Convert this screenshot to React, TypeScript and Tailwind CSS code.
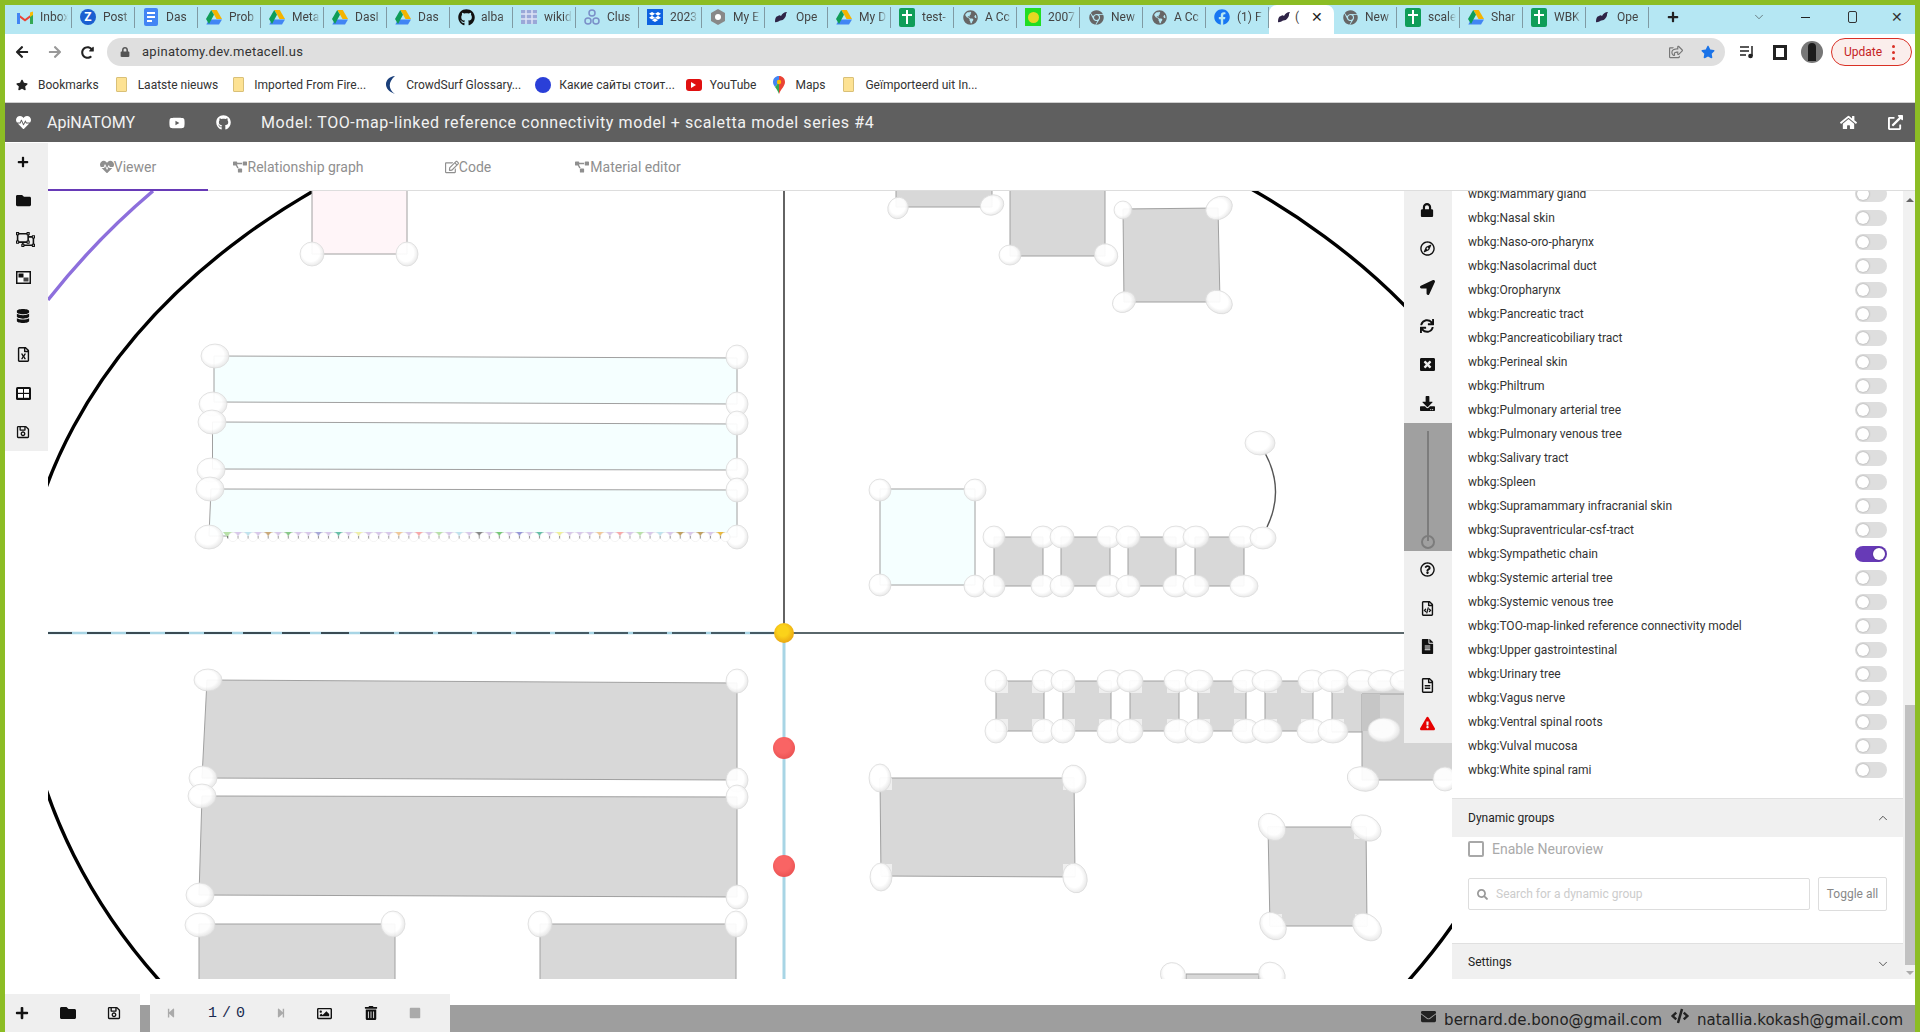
import React from "react";
import {
  FaPlus, FaFolder, FaRegObjectUngroup, FaDatabase, FaRegFileExcel, FaRegSave, FaLock, FaRegCompass,
  FaLocationArrow, FaSync, FaWindowClose, FaDownload, FaRegQuestionCircle, FaRegFileCode, FaFileAlt,
  FaRegFileAlt, FaExclamationTriangle, FaStepBackward, FaStepForward, FaRegImage, FaTrashAlt, FaStop,
  FaHome, FaExternalLinkAlt, FaHeartbeat, FaYoutube, FaGithub, FaEnvelope, FaCode, FaProjectDiagram,
  FaRegEdit, FaGlobeAmericas, FaChrome, FaFacebook, FaDropbox, FaStar, FaArrowLeft, FaArrowRight, FaRedoAlt,
  FaRegShareSquare, FaSearch,
} from "react-icons/fa";
import { ChevronUp, ChevronDown } from "lucide-react";

function Drive() {
  return (
    <svg width="16" height="15" viewBox="0 0 16 15">
      <polygon points="5.4,0 10.8,0 16,9 10.5,9" fill="#f4b400" />
      <polygon points="3,9.5 16,9.5 13,14.5 0.3,14.5" fill="#4285f4" />
      <polygon points="5.2,0 8,4.8 3,14 0,9" fill="#0f9d58" />
    </svg>
  );
}
function Gmail() {
  return (
    <svg width="16" height="13" viewBox="0 0 16 13">
      <path d="M0 2 L8 8 L16 2 L16 4.5 L8 10.5 L0 4.5Z" fill="#ea4335" />
      <rect x="0" y="2" width="3" height="11" fill="#4285f4" />
      <rect x="13" y="2" width="3" height="11" fill="#34a853" />
      <path d="M13 1.5 L16 0.5 L16 4 L13 6Z" fill="#fbbc04" />
    </svg>
  );
}
function Bird() {
  return (
    <svg width="14" height="12" viewBox="0 0 14 12">
      <path d="M1 11 C1 7 2 5.5 4 5 C5 4 6 4 7 5 C8 3 10 1 13 1 L12 3 C12.5 6 9 10 6 9.5 C4 11 2 11.5 1 11 Z" fill="#2f2447" />
    </svg>
  );
}
function Sheet() {
  return (
    <div className="w-[16px] h-[19px] bg-[#0f9d58] rounded-[2px] flex items-center justify-center shrink-0">
      <svg width="10" height="14" viewBox="0 0 10 14"><path d="M4 0h2v4h4v2H6v8H4V6H0V4h4z" fill="#fff" /></svg>
    </div>
  );
}
function TabIcon({ k }: { k: string }) {
  if (k === "gmail") return <Gmail />;
  if (k === "z")
    return <div className="w-[16px] h-[16px] rounded-full bg-[#1a5fd0] text-white text-[12px] font-bold leading-[16px] text-center">Z</div>;
  if (k === "docs")
    return (
      <div className="w-[14px] h-[18px] bg-[#4285f4] rounded-[2px] flex flex-col justify-center gap-[2px] px-[3px]">
        <div className="h-[2px] bg-white" /><div className="h-[2px] bg-white" /><div className="h-[2px] bg-white w-[5px]" />
      </div>
    );
  if (k === "drive") return <Drive />;
  if (k === "github") return <FaGithub className="text-[#111] text-[17px]" />;
  if (k === "wiki")
    return (
      <svg width="16" height="14" viewBox="0 0 16 14">
        <rect width="16" height="14" fill="#9aa8d8" />
        <path d="M0 4h16M0 9h16M5 0v14M11 0v14" stroke="#dfe4f5" strokeWidth="1.5" />
      </svg>
    );
  if (k === "cluster")
    return (
      <svg width="16" height="17" viewBox="0 0 16 17" fill="none" stroke="#7a8fc8" strokeWidth="1.5">
        <circle cx="8" cy="4" r="3" /><circle cx="4" cy="12" r="3" /><circle cx="12" cy="12" r="3" />
      </svg>
    );
  if (k === "dropbox")
    return (
      <div className="w-[16px] h-[16px] bg-[#0d62e0] flex items-center justify-center text-white text-[12px]"><FaDropbox /></div>
    );
  if (k === "hex")
    return (
      <svg width="16" height="16" viewBox="0 0 16 16">
        <polygon points="8,0 15,4 15,12 8,16 1,12 1,4" fill="#888" />
        <circle cx="8" cy="8" r="3" fill="#fff" />
      </svg>
    );
  if (k === "bird") return <Bird />;
  if (k === "sheet") return <Sheet />;
  if (k === "globe") return <FaGlobeAmericas className="text-[#666] text-[15px]" />;
  if (k === "smile")
    return (
      <div className="w-[16px] h-[18px] bg-[#22dd22] flex items-center justify-center">
        <div className="w-[11px] h-[11px] rounded-full bg-[#e6d822]" />
      </div>
    );
  if (k === "chrome") return <FaChrome className="text-[#666] text-[15px]" />;
  if (k === "fb") return <FaFacebook className="text-[#1877f2] text-[16px]" />;
  return null;
}

const browserTabs: [string, string][] = [
  ["gmail", "Inbox"], ["z", "Post"], ["docs", "Das"], ["drive", "Prob"], ["drive", "Meta"], ["drive", "DasI"],
  ["drive", "Das"], ["github", "alba"], ["wiki", "wikid"], ["cluster", "Clus"], ["dropbox", "2023"], ["hex", "My E"],
  ["bird", "Ope"], ["drive", "My D"], ["sheet", "test-"], ["globe", "A Cc"], ["smile", "2007"], ["chrome", "New"],
  ["globe", "A Cc"], ["fb", "(1) F"],
];
const browserTabs2: [string, string][] = [
  ["chrome", "New"], ["sheet", "scale"], ["drive", "Shar"], ["sheet", "WBK"], ["bird", "Ope"],
];

function BTab({ k, t }: { k: string; t: string }) {
  return (
    <div className="w-[63px] h-[21px] shrink-0 flex items-center border-r border-[#7f9aa3] pl-[7px] gap-[6px] overflow-hidden">
      <div className="w-[18px] flex justify-center shrink-0"><TabIcon k={k} /></div>
      <span className="w-[28px] overflow-hidden whitespace-nowrap text-[12px] text-[#444] [mask-image:linear-gradient(to_right,black_70%,transparent)]">{t}</span>
    </div>
  );
}

function TabStrip() {
  return (
    <div className="h-[29px] bg-[#b5e7f3] flex items-center pl-[4px] pb-[5px] shrink-0 font-['Roboto',sans-serif]">
      {browserTabs.map(([k, t], i) => <BTab key={i} k={k} t={t} />)}
      <div className="w-[65px] self-start h-[29px] bg-white rounded-t-[8px] shrink-0 flex items-center pl-[8px] pb-[5px] gap-[4px]">
        <Bird />
        <span className="text-[12px] text-[#444] w-[8px] overflow-hidden">(</span>
        <span className="text-[14px] text-[#222] leading-none ml-[4px]">✕</span>
      </div>
      {browserTabs2.map(([k, t], i) => <BTab key={i} k={k} t={t} />)}
      <FaPlus className="ml-[18px] text-[12px] text-[#222]" />
      <div className="ml-auto flex items-center text-[#333]">
        <div className="w-[47px] flex justify-center"><ChevronDown size={14} strokeWidth={1} /></div>
        <div className="w-[47px] flex justify-center"><div className="w-[9px] h-[1px] bg-[#222]" /></div>
        <div className="w-[47px] mr-[3px] flex justify-center">
          <div className="w-[9px] h-[12px] border border-[#333] rounded-[2px]" />
        </div>
        <div className="w-[36px] flex justify-center text-[14px] leading-none">✕</div>
      </div>
    </div>
  );
}

function AddressBar() {
  return (
    <div className="h-[33px] bg-white flex items-center pt-[3px] shrink-0 font-['Roboto',sans-serif]">
      <div className="w-[102px] flex items-center pl-[10px] gap-[19px] text-[14px]">
        <FaArrowLeft className="text-[#222] text-[14px]" />
        <FaArrowRight className="text-[#999] text-[14px]" />
        <FaRedoAlt className="text-[#222] text-[13px]" />
      </div>
      <div className="w-[1618px] h-[28px] rounded-full bg-[#dfdfdf] flex items-center pl-[13px] pr-[10px] shrink-0">
        <FaLock className="text-[#555] text-[10px]" />
        <span className="ml-[12px] text-[13px] text-[#333] tracking-[0.3px]">apinatomy.dev.metacell.us</span>
        <FaRegShareSquare className="ml-auto text-[#777] text-[14px]" />
        <FaStar className="ml-[18px] text-[#1a73e8] text-[14px]" />
      </div>
      <svg className="ml-[15px]" width="14" height="14" viewBox="0 0 14 14" fill="none" stroke="#222" strokeWidth="1.5"><path d="M0 2h9M0 6h9M0 10h6M12 1v10" /><circle cx="10.5" cy="11" r="1.6" fill="#222" /></svg>
      <div className="ml-[19px] w-[14px] h-[15px] border-[3px] border-[#222] bg-white" />
      <div className="ml-[14px] w-[22px] h-[22px] rounded-full bg-[#777] flex items-center justify-center overflow-hidden">
        <div className="w-[8px] h-[18px] bg-[#1c1c1c] rounded-t-full" />
      </div>
      <div className="ml-[8px] w-[81px] h-[28px] rounded-full border border-[#d93025] bg-[#fbeeec] flex items-center pl-[12px] gap-[10px]">
        <span className="text-[12px] text-[#c5221f]">Update</span>
        <div className="flex flex-col gap-[3px]">
          <div className="w-[3px] h-[3px] rounded-full bg-[#d93025]" />
          <div className="w-[3px] h-[3px] rounded-full bg-[#d93025]" />
          <div className="w-[3px] h-[3px] rounded-full bg-[#d93025]" />
        </div>
      </div>
    </div>
  );
}

function FolderBm() {
  return <div className="w-[11px] h-[15px] bg-[#fde293] border border-[#d9c078] rounded-[1px]" />;
}
function Bookmarks() {
  return (
    <div className="h-[36px] bg-white border-b border-[#cfcfcf] flex items-center text-[12px] text-[#333] shrink-0 font-['Roboto',sans-serif] pl-[11px]">
      <FaStar className="text-[#222] text-[12px]" />
      <span className="ml-[10px]">Bookmarks</span>
      <div className="ml-[17px]"><FolderBm /></div>
      <span className="ml-[11px]">Laatste nieuws</span>
      <div className="ml-[15px]"><FolderBm /></div>
      <span className="ml-[10px]">Imported From Fire...</span>
      <svg className="ml-[17px]" width="14" height="18" viewBox="0 0 14 18"><path d="M12 0 C1 1 -1 14 12 18 C5 13 5 6 12 0Z" fill="#1a3f7a" /></svg>
      <span className="ml-[9px]">CrowdSurf Glossary...</span>
      <div className="ml-[14px] w-[16px] h-[16px] rounded-full bg-[#2a3fd8]" />
      <span className="ml-[8px]">Какие сайты стоит...</span>
      <div className="ml-[11px] w-[16px] h-[12px] rounded-[3px] bg-[#e01010] flex items-center justify-center">
        <div className="w-0 h-0 border-y-[3px] border-y-transparent border-l-[5px] border-l-white" />
      </div>
      <span className="ml-[8px]">YouTube</span>
      <svg className="ml-[17px]" width="12" height="18" viewBox="0 0 12 18">
        <path d="M6 0 C9.5 0 12 2.5 12 6 C12 10 8 13 6 18 Z" fill="#ea4335" />
        <path d="M6 0 C2.5 0 0 2.5 0 6 C0 8 1 9.5 2 11 L6 6Z" fill="#4285f4" />
        <path d="M2 11 C3.5 13 5 15 6 18 L6 6Z" fill="#34a853" />
        <circle cx="6" cy="6" r="2.2" fill="#fbbc04" />
      </svg>
      <span className="ml-[10px]">Maps</span>
      <div className="ml-[18px]"><FolderBm /></div>
      <span className="ml-[11px]">Geïmporteerd uit In...</span>
    </div>
  );
}

function Header() {
  return (
    <div className="h-[39px] bg-[#5f5f5f] flex items-center text-[#f2f2f2] text-[16px] shrink-0 font-['Roboto',sans-serif] pl-[11px]">
      <FaHeartbeat className="text-[15px] text-white" />
      <span className="ml-[16px]">ApiNATOMY</span>
      <FaYoutube className="ml-[34px] text-[16px] text-white" />
      <FaGithub className="ml-[31px] text-[15px] text-white" />
      <span className="ml-[30px] tracking-[0.6px]">Model: TOO-map-linked reference connectivity model + scaletta model series #4</span>
      <FaHome className="ml-auto text-[17px] text-white" />
      <FaExternalLinkAlt className="ml-[31px] mr-[12px] text-[15px] text-white" />
    </div>
  );
}

function MiniFrame() {
  return (
    <svg width="15" height="13" viewBox="0 0 15 13">
      <rect x="0.75" y="0.75" width="13.5" height="11.5" fill="#fff" stroke="#111" strokeWidth="1.5" />
      <rect x="2.5" y="2.5" width="5" height="4" fill="#111" />
      <rect x="7.5" y="6.5" width="5" height="4" fill="#444" />
    </svg>
  );
}
function MiniGrid() {
  return (
    <svg width="15" height="13" viewBox="0 0 15 13">
      <rect width="15" height="13" rx="1.5" fill="#111" />
      <rect x="2" y="2" width="5" height="3.8" fill="#fff" /><rect x="8" y="2" width="5" height="3.8" fill="#fff" />
      <rect x="2" y="7" width="5" height="3.8" fill="#fff" /><rect x="8" y="7" width="5" height="3.8" fill="#fff" />
    </svg>
  );
}

function LeftToolbar() {
  const items = [
    <FaPlus className="text-[12px] ml-[1px]" />, <FaFolder className="text-[15px]" />, <FaRegObjectUngroup className="text-[19px]" />,
    <MiniFrame />, <FaDatabase className="text-[14px]" />, <FaRegFileExcel className="text-[15px]" />, <MiniGrid />, <FaRegSave className="text-[14px]" />,
  ];
  return (
    <div className="w-[43px] shrink-0 pt-[1px]">
      <div className="h-[308px] bg-[#efefef] flex flex-col text-[#111]">
        {items.map((it, i) => <div key={i} className="h-[38.5px] flex items-center pl-[11px]">{it}</div>)}
      </div>
    </div>
  );
}

function Tab({ icon, label, active, w }: { icon: React.ReactNode; label: string; active?: boolean; w: string }) {
  return (
    <div className={`${w} h-[49px] ${active ? "pt-[3px] border-b-2 border-[#673ab7]" : "pt-[1px]"} flex items-center justify-center text-[14px] text-[#8f8f8f]`}>
      {icon}<span>{label}</span>
    </div>
  );
}

function Blob({ x, y, rx = 12, ry = 12, rot = 0 }: { x: number; y: number; rx?: number; ry?: number; rot?: number }) {
  return <ellipse cx={x} cy={y} rx={rx} ry={ry} transform={rot ? `rotate(${rot} ${x} ${y})` : undefined} fill="url(#blob)" stroke="#dcdcdc" strokeWidth="0.8" fillOpacity="0.93" />;
}

const G = "#d8d8d8";
const dotColors = ["#b8e0a8", "#d8c8ea", "#bfe3ee", "#d8c8ea", "#c8a878", "#d8c8ea", "#88c888", "#d8c8ea", "#d8c8ea", "#a8a8d8", "#d8c8ea", "#68c0a8", "#d8c8ea", "#f0f0a8", "#d8c8ea", "#d8c8ea", "#d8c8ea", "#f0c898", "#d8c8ea", "#f8a8a8", "#d8c8ea", "#b8e0a8", "#d8c8ea", "#bfe3ee", "#d8c8ea", "#888888", "#d8c8ea", "#78c878", "#d8c8ea", "#9898d8", "#d8c8ea", "#68c0a8", "#d8c8ea", "#f0f098", "#d8c8ea", "#d8c8ea", "#d8c8ea", "#f0c898", "#d8c8ea", "#f8a8a8", "#d8c8ea", "#b8e0a8", "#d8c8ea", "#bfe3ee", "#d8c8ea", "#c0a060", "#d8c8ea", "#c0a060", "#d8c8ea", "#e8b840"];

const polys: [string, string][] = [
  ["312,185 407,185 407,254 312,254", "#fff5f8"],
  ["214,356 737,358 737,404 214,402", "#f5ffff"],
  ["212.5,422 737,424 737,470 212.5,469", "#f5ffff"],
  ["211,489 737,490 737,537 209,536", "#f5ffff"],
  ["880,489 975,489 975,585 880,585", "#f5ffff"],
  ["896,185 992,185 992,207 896,207", G],
  ["1010,185 1105,185 1105,256 1010,256", G],
  ["1123,209 1218,208 1220,302 1124,302", G],
  ["994,537 1043,537 1043,586 994,586", G],
  ["1061,537 1110,537 1110,586 1061,586", G],
  ["1128,537 1176,537 1176,586 1128,586", G],
  ["1195,537 1244,537 1244,586 1195,586", G],
  ["996,681 1044,681 1044,731 996,731", G],
  ["1063,681 1111,681 1111,731 1063,731", G],
  ["1130,681 1179,681 1179,731 1130,731", G],
  ["1198,681 1246,681 1246,731 1198,731", G],
  ["1265,681 1313,681 1313,731 1265,731", G],
  ["1332,681 1460,681 1460,732 1332,732", G],
  ["1362,694 1460,694 1460,780 1362,780", "#d4d4d4"],
  ["207,680 737,683 737,780 202,778", G],
  ["202,796 737,797 737,897 199,895", G],
  ["199,924 395,924 395,990 199,990", G],
  ["540,924 736,924 736,990 540,990", G],
  ["880,778 1074,778 1075,877 881,876", G],
  ["1268,827 1366,827 1367,926 1270,926", G],
  ["1186,974 1259,974 1259,990 1186,990", G],
];

const blobs: [number, number, number?, number?, number?][] = [
  [312, 254, 12, 12], [407, 254, 11, 12], [898, 208, 10, 11, 30], [992, 205, 12, 10, -20], [1010, 255, 11, 10], [1106, 255, 12, 11, 30],
  [1123, 210, 9, 9], [1219, 208, 14, 11, -30], [1124, 302, 12, 10, -30], [1219, 302, 14, 11, 30],
  [215, 356, 14, 12], [213, 404, 14, 12], [212, 422, 14, 12], [211, 470, 14, 12], [210, 489, 14, 12], [209, 537, 14, 12],
  [737, 357, 11, 12], [737, 404, 11, 12], [737, 423, 11, 12], [737, 470, 11, 12], [737, 490, 11, 12], [737, 537, 11, 12],
  [880, 490, 11, 11], [975, 490, 11, 11], [880, 585, 11, 11], [975, 586, 11, 11],
  [994, 537, 11, 11], [1043, 537, 12, 11], [1062, 537, 12, 11], [1109, 537, 12, 11], [1128, 537, 12, 11], [1176, 537, 13, 11], [1196, 537, 13, 11], [1243, 537, 14, 11], [1263, 538, 13, 11],
  [994, 586, 11, 11], [1043, 586, 12, 11], [1062, 586, 12, 11], [1109, 586, 13, 11], [1128, 586, 12, 11], [1176, 586, 13, 11], [1196, 586, 13, 11], [1244, 586, 14, 11],
  [1260, 443, 15, 12],
  [996, 681, 11, 11], [1044, 681, 12, 11], [1063, 681, 12, 11], [1110, 681, 13, 11], [1130, 681, 13, 11], [1178, 681, 14, 11], [1199, 681, 14, 11], [1246, 681, 14, 11], [1267, 681, 15, 11], [1312, 681, 14, 11], [1333, 681, 15, 11], [1362, 681, 15, 11], [1383, 681, 15, 11], [1405, 681, 15, 11],
  [996, 731, 11, 12], [1044, 731, 12, 12], [1063, 731, 12, 12], [1110, 731, 13, 12], [1130, 731, 13, 12], [1178, 731, 14, 12], [1199, 731, 14, 12], [1246, 731, 14, 12], [1267, 731, 15, 12], [1312, 731, 15, 12], [1333, 731, 15, 12], [1384, 730, 16, 12],
  [1363, 779, 16, 12, 15], [1445, 779, 12, 12],
  [208, 680, 14, 11], [737, 681, 11, 12], [203, 778, 14, 12], [737, 780, 11, 12], [202, 796, 14, 12], [737, 797, 11, 12], [200, 895, 14, 12], [737, 897, 11, 12],
  [200, 925, 15, 12], [393, 924, 12, 13], [540, 924, 12, 13], [736, 924, 11, 13],
  [880, 778, 11, 14], [1074, 779, 12, 14, -10], [881, 877, 11, 14], [1075, 878, 12, 15, -15],
  [1272, 827, 15, 12, 45], [1366, 828, 16, 12, 30], [1273, 926, 15, 12, 50], [1367, 927, 16, 12, 40],
  [1173, 975, 13, 12, 40], [1272, 975, 14, 12, 40],
];

const corners: [number, number][] = [
  [880, 778], [1063, 778], [880, 864], [1063, 864], [1268, 827], [1354, 827], [1270, 914], [1355, 914],
  [996, 681], [1032, 681], [1063, 681], [1099, 681], [1130, 681], [1167, 681], [1198, 681], [1234, 681], [1265, 681], [1301, 681], [1332, 681],
  [996, 719], [1032, 719], [1063, 719], [1099, 719], [1130, 719], [1167, 719], [1198, 719], [1234, 719], [1265, 719], [1301, 719], [1332, 719],
];

function Scene() {
  const dashes = [];
  for (let i = 0; i < 19; i++) {
    const len = i < 4 ? 24 : i < 8 ? 28 : 34;
    dashes.push(<line key={i} x1={48 + i * 39} y1="633" x2={48 + i * 39 + len} y2="633" stroke="#26323a" strokeWidth="1.7" />);
  }
  return (
    <svg className="block w-full h-full" viewBox="48 191 1404 788">
      <defs>
        <radialGradient id="blob" cx="45%" cy="45%" r="60%">
          <stop offset="60%" stopColor="#ffffff" />
          <stop offset="100%" stopColor="#e2e2e2" />
        </radialGradient>
        <radialGradient id="yel" cx="45%" cy="40%" r="65%">
          <stop offset="40%" stopColor="#fbd21a" />
          <stop offset="100%" stopColor="#e8a010" />
        </radialGradient>
        <radialGradient id="redb" cx="45%" cy="40%" r="65%">
          <stop offset="50%" stopColor="#f96464" />
          <stop offset="100%" stopColor="#e85050" />
        </radialGradient>
      </defs>
      <path d="M153 191 Q95 240 48 300" fill="none" stroke="#8d6fdc" strokeWidth="3.4" />
      <path d="M20 633 A764 561 0 0 1 1548 633 A764 603 0 0 1 20 633" fill="none" stroke="#000" strokeWidth="3.4" />
      {polys.map(([p, f], i) => <polygon key={i} points={p} fill={f} stroke="#a0a0a0" strokeWidth="1" />)}
      <rect x="1362" y="694" width="18" height="37" fill="#c6c6c6" />
      {corners.map(([x, y], i) => <rect key={i} x={x} y={y} width="12" height="12" fill="#ffffff" fillOpacity="0.6" />)}
      <path d="M1265 453 Q1285 490 1267 527" fill="none" stroke="#555" strokeWidth="1.4" />
      <line x1="784" y1="191" x2="784" y2="633" stroke="#222" strokeWidth="1.4" />
      <line x1="784" y1="633" x2="784" y2="979" stroke="#a8d5e5" strokeWidth="3" />
      <line x1="48" y1="633" x2="784" y2="633" stroke="#a8d5e5" strokeWidth="2.4" />
      {dashes}
      <line x1="784" y1="633" x2="1404" y2="633" stroke="#23343a" strokeWidth="1.6" />
      {blobs.map(([x, y, rx, ry, rot], i) => <Blob key={i} x={x} y={y} rx={rx} ry={ry} rot={rot} />)}
      {dotColors.map((c, i) => {
        const x = 228 + i * 10.05;
        return (
          <g key={i}>
            <polygon points={`${x - 5},532 ${x + 5},532 ${x},538`} fill={c} />
            <rect x={x - 0.7} y="536" width="1.4" height="2.4" fill="#555" />
          </g>
        );
      })}
      {dotColors.map((_, i) => {
        const x = 233 + i * 10.05;
        return <circle key={i} cx={x} cy="537" r="4.6" fill="#fff" stroke="#e8e8e8" strokeWidth="0.5" />;
      })}
      <circle cx="784" cy="633" r="10" fill="url(#yel)" />
      <circle cx="784" cy="748" r="11" fill="url(#redb)" />
      <circle cx="784" cy="866" r="11" fill="url(#redb)" />
    </svg>
  );
}

function RightToolbar() {
  const a = [
    <FaLock className="text-[14px]" />, <FaRegCompass className="text-[15px]" />, <FaLocationArrow className="text-[15px]" />,
    <FaSync className="text-[14px]" />, <FaWindowClose className="text-[15px]" />, <FaDownload className="text-[15px]" />,
  ];
  const b = [
    <FaRegQuestionCircle className="text-[15px]" />, <FaRegFileCode className="text-[15px]" />, <FaFileAlt className="text-[15px]" />,
    <FaRegFileAlt className="text-[15px]" />, <FaExclamationTriangle className="text-[15px] text-[#e60000]" />,
  ];
  return (
    <div className="absolute right-0 top-0 w-[48px] bg-[#efefef] flex flex-col text-[#111]">
      {a.map((it, i) => <div key={i} className="h-[38.6px] flex items-center pl-[16px]">{it}</div>)}
      <div className="h-[128px] bg-[#a0a0a0] relative flex justify-center">
        <div className="w-[2px] h-[110px] mt-[8px] bg-[#7c7c7c]" />
        <div className="absolute left-[17px] bottom-[2px] w-[14px] h-[14px] rounded-full border-2 border-[#7c7c7c]" />
      </div>
      {b.map((it, i) => <div key={i} className="h-[38.5px] flex items-center pl-[16px]">{it}</div>)}
    </div>
  );
}

const rows = [
  "Mammary gland", "Nasal skin", "Naso-oro-pharynx", "Nasolacrimal duct", "Oropharynx", "Pancreatic tract",
  "Pancreaticobiliary tract", "Perineal skin", "Philtrum", "Pulmonary arterial tree", "Pulmonary venous tree",
  "Salivary tract", "Spleen", "Supramammary infracranial skin", "Supraventricular-csf-tract", "Sympathetic chain",
  "Systemic arterial tree", "Systemic venous tree", "TOO-map-linked reference connectivity model",
  "Upper gastrointestinal", "Urinary tree", "Vagus nerve", "Ventral spinal roots", "Vulval mucosa", "White spinal rami",
];

function Toggle({ on }: { on: boolean }) {
  return (
    <div className={`w-[32px] h-[16px] rounded-full flex items-center px-[2px] ${on ? "bg-[#673ab7] justify-end" : "bg-[#dedede] justify-start"}`}>
      <div className="w-[12px] h-[12px] rounded-full bg-white shadow-[0_0_2px_rgba(0,0,0,0.35)]" />
    </div>
  );
}

function Panel() {
  return (
    <div className="w-[451px] shrink-0 bg-white flex flex-col font-['Roboto',sans-serif]">
      <div className="h-[607px] overflow-hidden shrink-0">
        <div className="-mt-[9px] pl-[16px] pr-[16px]">
          {rows.map((r) => (
            <div key={r} className="h-[24px] flex items-center justify-between text-[12px] text-[#333]">
              <span>wbkg:{r}</span>
              <Toggle on={r === "Sympathetic chain"} />
            </div>
          ))}
        </div>
      </div>
      <div className="h-[39px] shrink-0 bg-[#f0f0f0] border-t border-[#e0e0e0] flex items-center justify-between pl-[16px] pr-[13px] text-[12px] text-[#222]">
        <span>Dynamic groups</span>
        <ChevronUp size={14} strokeWidth={1.4} className="text-[#333]" />
      </div>
      <div className="h-[106px] shrink-0 px-[16px] pt-[4px]">
        <div className="flex items-center h-[16px]">
          <div className="w-[16px] h-[16px] border-2 border-[#a8a8a8] rounded-[2px]" />
          <span className="ml-[8px] text-[14px] text-[#aaa]">Enable Neuroview</span>
        </div>
        <div className="flex items-center mt-[20px]">
          <div className="w-[342px] h-[32px] border border-[#ddd] rounded-[2px] flex items-center pl-[8px]">
            <FaSearch className="text-[11px] text-[#999]" />
            <span className="ml-[8px] text-[12px] text-[#ccc]">Search for a dynamic group</span>
          </div>
          <div className="ml-[8px] w-[69px] h-[34px] border border-[#ddd] rounded-[2px] flex items-center justify-center text-[12px] text-[#888]">Toggle all</div>
        </div>
      </div>
      <div className="h-[36px] pt-[1px] shrink-0 bg-[#f0f0f0] border-t border-[#e0e0e0] flex items-center justify-between pl-[16px] pr-[13px] text-[12px] text-[#222]">
        <span>Settings</span>
        <ChevronDown size={14} strokeWidth={1.4} className="text-[#333] mt-[4px]" />
      </div>
    </div>
  );
}

function Scrollbar() {
  return (
    <div className="w-[12px] shrink-0 bg-[#f1f1f1] flex flex-col items-end">
      <div className="w-[10px] h-[514px] flex justify-center pt-[7px]">
        <div className="w-0 h-0 border-x-[4px] border-x-transparent border-b-[4px] border-b-[#666]" />
      </div>
      <div className="w-[10px] h-[260px] bg-[#c1c1c1]" />
      <div className="w-[10px] flex justify-center pt-[6px]">
        <div className="w-0 h-0 border-x-[4px] border-x-transparent border-t-[4px] border-t-[#aaa]" />
      </div>
    </div>
  );
}

function BottomBars() {
  return (
    <div className="absolute left-[5px] bottom-0 flex gap-[10px] text-[#111] font-['Roboto',sans-serif]">
      <div className="w-[135px] h-[38px] bg-[#efefef] flex items-center pl-[9px] gap-[30px]">
        <FaPlus className="text-[14px] w-[16px]" />
        <FaFolder className="text-[16px] w-[16px]" />
        <FaRegSave className="text-[14px] w-[16px]" />
      </div>
      <div className="w-[300px] h-[38px] bg-[#efefef] flex items-center pl-[16px]">
        <FaStepBackward className="text-[10px] text-[#aaa]" />
        <span className="ml-[32px] mt-[2px] w-[36px] font-['Liberation_Mono',monospace] text-[15px] text-[#1a2a50] whitespace-nowrap tracking-[-2px]">1 / 0</span>
        <FaStepForward className="ml-[32px] text-[10px] text-[#aaa]" />
        <FaRegImage className="ml-[31px] text-[15px]" />
        <FaTrashAlt className="ml-[32px] text-[14px]" />
        <FaStop className="ml-[31px] text-[12px] text-[#aaa]" />
      </div>
    </div>
  );
}

export default function App() {
  return (
    <div className="relative w-[1920px] h-[1032px] overflow-hidden bg-[#8cbd24] pt-[5px] px-[5px] flex flex-col">
      <TabStrip />
      <AddressBar />
      <Bookmarks />
      <Header />
      <div className="flex-1 min-h-0 bg-white flex font-['Roboto',sans-serif]">
        <LeftToolbar />
        <div className="flex-1 min-w-0 flex flex-col">
          <div className="h-[49px] shrink-0 flex border-b border-[#ddd]">
            <Tab w="w-[160px]" active icon={<FaHeartbeat className="text-[14px]" />} label="Viewer" />
            <Tab w="w-[180px]" icon={<FaProjectDiagram className="text-[14px] mr-[1px]" />} label="Relationship graph" />
            <Tab w="w-[160px]" icon={<FaRegEdit className="text-[14px]" />} label="Code" />
            <Tab w="w-[160px]" icon={<FaProjectDiagram className="text-[14px] mr-[1px]" />} label="Material editor" />
          </div>
          <div className="h-[788px] shrink-0 flex">
            <div className="relative w-[1404px] shrink-0 overflow-hidden">
              <Scene />
              <RightToolbar />
            </div>
            <Panel />
            <Scrollbar />
          </div>
        </div>
      </div>
      <div className="h-[27px] pt-[3px] shrink-0 bg-[#9e9e9e] flex items-center justify-end pr-[12px] text-[#222] text-[15px] font-['DejaVu_Sans',sans-serif]">
        <FaEnvelope className="text-[15px] -mt-[8px] mr-[8px]" />
        <span>bernard.de.bono@gmail.com</span>
        <FaCode className="text-[18px] -mt-[8px] ml-[9px] mr-[8px]" />
        <span>natallia.kokash@gmail.com</span>
      </div>
      <BottomBars />
    </div>
  );
}
